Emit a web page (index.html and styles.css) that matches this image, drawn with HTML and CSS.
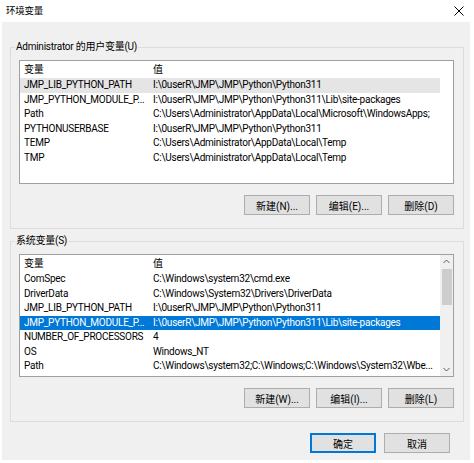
FILE: index.html
```html
<!DOCTYPE html>
<html lang="zh-CN">
<head>
    <meta charset="UTF-8">
    <meta name="viewport" content="width=device-width, initial-scale=1.0">
    <title>环境变量</title>
    <link rel="stylesheet" href="styles.css">
</head>
<body>
    <div class="window">
        <div class="titlebar">
            <span class="title">环境变量</span>
            <svg class="close" width="10" height="10" viewBox="0 0 10 10">
                <path d="M0.5 0.5 L9.5 9.5 M9.5 0.5 L0.5 9.5" stroke="#000" stroke-width="1" fill="none"/>
            </svg>
        </div>
        <div class="client">
            <fieldset class="group">
                <legend>Administrator 的用户变量(U)</legend>
                <div class="list list-user">
                    <div class="list-main">
                        <div class="row list-head"><span class="col-name">变量</span><span class="col-value">值</span></div>
                        <div class="row hover"><span class="col-name">JMP_LIB_PYTHON_PATH</span><span class="col-value">I:\0userR\JMP\JMP\Python\Python311</span></div>
                        <div class="row"><span class="col-name">JMP_PYTHON_MODULE_P...</span><span class="col-value">I:\0userR\JMP\JMP\Python\Python311\Lib\site-packages</span></div>
                        <div class="row"><span class="col-name">Path</span><span class="col-value">C:\Users\Administrator\AppData\Local\Microsoft\WindowsApps;</span></div>
                        <div class="row"><span class="col-name">PYTHONUSERBASE</span><span class="col-value">I:\0userR\JMP\JMP\Python\Python311</span></div>
                        <div class="row"><span class="col-name">TEMP</span><span class="col-value">C:\Users\Administrator\AppData\Local\Temp</span></div>
                        <div class="row"><span class="col-name">TMP</span><span class="col-value">C:\Users\Administrator\AppData\Local\Temp</span></div>
                    </div>
                </div>
                <div class="buttons">
                    <button class="btn">新建(N)...</button>
                    <button class="btn">编辑(E)...</button>
                    <button class="btn">删除(D)</button>
                </div>
            </fieldset>

            <fieldset class="group group-system">
                <legend>系统变量(S)</legend>
                <div class="list list-system">
                    <div class="list-main">
                        <div class="row list-head"><span class="col-name">变量</span><span class="col-value">值</span></div>
                        <div class="row"><span class="col-name">ComSpec</span><span class="col-value">C:\Windows\system32\cmd.exe</span></div>
                        <div class="row"><span class="col-name">DriverData</span><span class="col-value">C:\Windows\System32\Drivers\DriverData</span></div>
                        <div class="row"><span class="col-name">JMP_LIB_PYTHON_PATH</span><span class="col-value">I:\0userR\JMP\JMP\Python\Python311</span></div>
                        <div class="row selected"><span class="col-name">JMP_PYTHON_MODULE_P...</span><span class="col-value">I:\0userR\JMP\JMP\Python\Python311\Lib\site-packages</span></div>
                        <div class="row"><span class="col-name">NUMBER_OF_PROCESSORS</span><span class="col-value">4</span></div>
                        <div class="row"><span class="col-name">OS</span><span class="col-value">Windows_NT</span></div>
                        <div class="row"><span class="col-name">Path</span><span class="col-value">C:\Windows\system32;C:\Windows;C:\Windows\System32\Wbe...</span></div>
                        <div class="row"><span class="col-name">PATHEXT</span><span class="col-value">.COM;.EXE;.BAT;.CMD;.VBS;.VBE;.JS;.JSE;.WSF;.WSH;.MSC</span></div>
                    </div>
                    <div class="scrollbar">
                        <svg class="arrow" width="13" height="13" viewBox="0 0 13 13">
                            <path d="M3.5 8 L6.5 5 L9.5 8" stroke="#606060" stroke-width="1" fill="none"/>
                        </svg>
                        <div class="track">
                            <div class="thumb"></div>
                        </div>
                        <svg class="arrow" width="13" height="13" viewBox="0 0 13 13">
                            <path d="M3.5 5 L6.5 8 L9.5 5" stroke="#606060" stroke-width="1" fill="none"/>
                        </svg>
                    </div>
                </div>
                <div class="buttons">
                    <button class="btn">新建(W)...</button>
                    <button class="btn">编辑(I)...</button>
                    <button class="btn">删除(L)</button>
                </div>
            </fieldset>

            <div class="footer">
                <button class="btn btn-default">确定</button>
                <button class="btn">取消</button>
            </div>
        </div>
    </div>
</body>
</html>
```

FILE: styles.css
```css
* {
    margin: 0;
    padding: 0;
    box-sizing: border-box;
    font-family: Roboto, "Noto Sans CJK SC", sans-serif;
}

body {
    width: 474px;
    height: 463px;
    background-color: #fff;
    color: #000;
    font-size: 10px;
    letter-spacing: -0.25px;
    overflow: hidden;
}

.window {
    width: 474px;
    height: 463px;
    background-color: #fff;
}

.titlebar {
    height: 22px;
    display: flex;
    align-items: center;
    justify-content: space-between;
    padding: 0 10px 0 6px;
}

.title {
    font-size: 9.5px;
    line-height: 14px;
}

.client {
    height: 438px;
    margin: 0 4px 0 2px;
    background-color: #f0f0f0;
    padding: 18px 6px 0 8px;
}

.group {
    border: 1px solid #dcdcdc;
    padding: 6px 9px 13px 8px;
}

.group legend {
    margin-left: -4px;
    padding: 0 1px;
    line-height: 14px;
}

.group-system {
    margin-top: 5px;
}

.list {
    display: flex;
    width: 435px;
    border: 1px solid #a0a0a0;
    background-color: #fff;
    overflow: hidden;
}

.list-user {
    height: 124px;
}

.list-system {
    height: 123px;
}

.list-main {
    flex: 1;
    overflow: hidden;
}

.row {
    display: flex;
    width: 420px;
    height: 14.5px;
    line-height: 14.5px;
    white-space: nowrap;
}

.list-head {
    height: 17px;
    line-height: 17px;
}

.col-name {
    width: 133px;
    padding-left: 4px;
    overflow: hidden;
}

.col-value {
    flex: 1;
    overflow: hidden;
}

.row.hover {
    background-color: #e5e5e5;
}

.row.selected {
    background-color: #0078d7;
    color: #fff;
}

.scrollbar {
    width: 13px;
    display: flex;
    flex-direction: column;
    background-color: #f0f0f0;
}

.arrow {
    display: block;
    flex-shrink: 0;
}

.track {
    flex: 1;
    padding: 1px 1px 0 2px;
}

.thumb {
    height: 36px;
    background-color: #cdcdcd;
}

.buttons {
    display: flex;
    justify-content: flex-end;
    gap: 6px;
    margin-top: 11px;
}

.btn {
    width: 66px;
    height: 20px;
    background-color: #e1e1e1;
    border: 1px solid #adadad;
    font-size: 10px;
    color: #000;
    font-family: Roboto, "Noto Sans CJK SC", sans-serif;
}

.btn-default {
    border-color: #0078d7;
    box-shadow: inset 0 0 0 1px #0078d7;
}

.footer {
    display: flex;
    justify-content: flex-end;
    gap: 8px;
    margin-top: 11px;
    padding-right: 14px;
}
```
